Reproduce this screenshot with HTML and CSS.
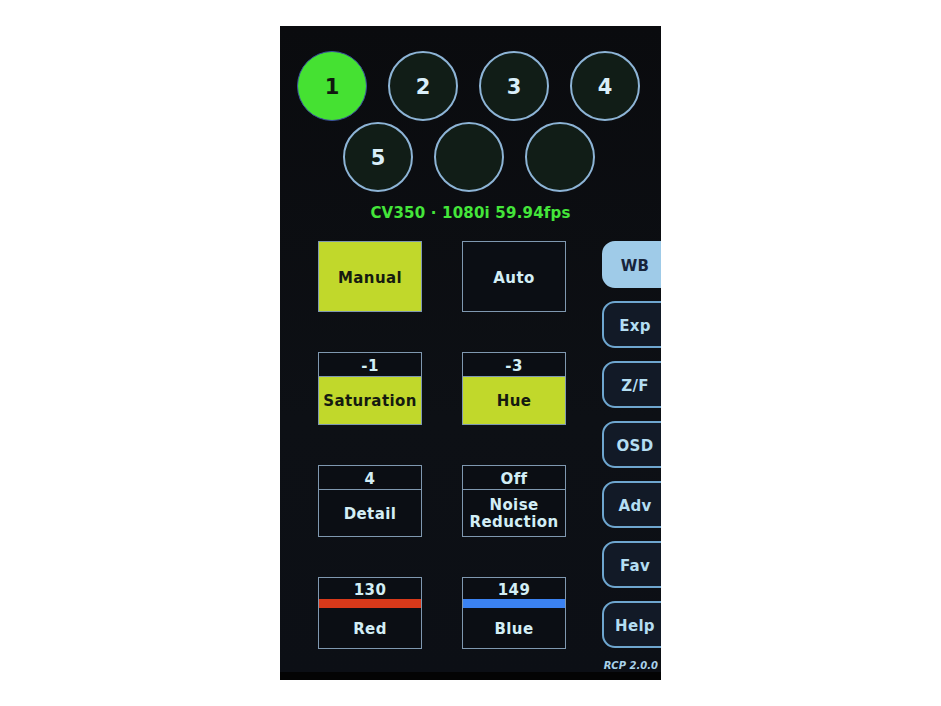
FILE: index.html
```html
<!DOCTYPE html>
<html>
<head>
<meta charset="utf-8">
<link rel="stylesheet" href="styles.css">
</head>
<body>
<div class="screen">
  <div class="cams">
    <div class="cam-row row1">
      <div class="cam active">1</div>
      <div class="cam">2</div>
      <div class="cam">3</div>
      <div class="cam">4</div>
    </div>
    <div class="cam-row row2">
      <div class="cam">5</div>
      <div class="cam"></div>
      <div class="cam"></div>
    </div>
  </div>
  <div class="status">CV350 · 1080i 59.94fps</div>
  <div class="main">
    <div class="grid">
      <div class="box on r1"><span class="lbl">Manual</span></div>
      <div class="box r1"><span class="lbl">Auto</span></div>
      <div class="box val r2"><div class="hd">-1</div><div class="bd on">Saturation</div></div>
      <div class="box val r2"><div class="hd">-3</div><div class="bd on">Hue</div></div>
      <div class="box val r3"><div class="hd">4</div><div class="bd">Detail</div></div>
      <div class="box val r3"><div class="hd">Off</div><div class="bd two">Noise<br>Reduction</div></div>
      <div class="box val r4"><div class="hd short">130</div><div class="bar red"></div><div class="bd">Red</div></div>
      <div class="box val r4"><div class="hd short">149</div><div class="bar blue"></div><div class="bd">Blue</div></div>
    </div>
    <div class="side">
      <div class="tab sel">WB</div>
      <div class="tab">Exp</div>
      <div class="tab">Z/F</div>
      <div class="tab">OSD</div>
      <div class="tab">Adv</div>
      <div class="tab">Fav</div>
      <div class="tab">Help</div>
      <div class="ver">RCP 2.0.0</div>
    </div>
  </div>
  <div class="bottom"></div>
</div>
</body>
</html>
```
FILE: styles.css
```css
html, body {
  margin: 0;
  padding: 0;
  background: #ffffff;
}
body {
  font-family: "DejaVu Sans", "Liberation Sans", sans-serif;
  font-weight: bold;
}
.screen {
  margin-left: 280px;
  margin-top: 26px;
  width: 381px;
  height: 654px;
  background: linear-gradient(180deg, #0a0b0e 0%, #0d1015 60%, #0c0f15 100%);
  overflow: hidden;
  display: flex;
  flex-direction: column;
}
.cams {
  padding-top: 25px;
  display: flex;
  flex-direction: column;
  gap: 1px;
}
.cam-row {
  display: flex;
  gap: 21px;
}
.row1 { padding-left: 17px; }
.row2 { padding-left: 63px; }
.cam {
  width: 70px;
  height: 70px;
  box-sizing: border-box;
  border-radius: 50%;
  border: 2px solid #8db4d6;
  background: #111d17;
  color: #d9eef9;
  font-size: 21px;
  padding-top: 2px;
  display: flex;
  align-items: center;
  justify-content: center;
}
.cam.active {
  background: #45e132;
  border-color: #3a4fa0;
  border-width: 1px;
  color: #10180f;
}
.status {
  margin-top: 10px;
  height: 20px;
  line-height: 22px;
  text-align: center;
  color: #44e63a;
  font-size: 15px;
  letter-spacing: 0.2px;
}
.main {
  margin-top: 19px;
  display: flex;
  flex: 1;
}
.grid {
  margin-left: 38px;
  display: grid;
  grid-template-columns: 104px 104px;
  grid-template-rows: 71px 73px 72px 72px;
  column-gap: 40px;
  row-gap: 40px;
  align-content: start;
}
.box {
  box-sizing: border-box;
  border: 1.5px solid #7f98b0;
  color: #d3eef6;
  font-size: 15px;
  letter-spacing: 0.4px;
  display: flex;
  flex-direction: column;
  background: #0b0e14;
}
.box.on {
  background: #c1d82b;
  color: #151a10;
}
.box .lbl {
  margin: auto;
  padding-top: 2px;
}
.box.r1 {
  align-items: center;
  justify-content: center;
}
.hd {
  height: 24px;
  box-sizing: border-box;
  border-bottom: 1.5px solid #7f98b0;
  padding-top: 2px;
  display: flex;
  align-items: center;
  justify-content: center;
  flex: none;
}
.hd.short {
  height: 21px;
  border-bottom: none;
}
.bar {
  height: 9px;
  flex: none;
}
.bar.red { background: #d8391a; }
.bar.blue { background: #3b82f2; }
.bd {
  flex: 1;
  display: flex;
  align-items: center;
  justify-content: center;
  text-align: center;
  line-height: 17px;
  padding-top: 2px;
}
.bd.on {
  background: #c1d82b;
  color: #151a10;
}
.side {
  margin-left: 36px;
  width: 59px;
  display: flex;
  flex-direction: column;
  gap: 13px;
}
.tab {
  width: 74px;
  height: 47px;
  flex: none;
  box-sizing: border-box;
  border: 2px solid #6ea6cf;
  border-radius: 13px;
  background: #121a27;
  color: #b4def2;
  font-size: 15px;
  letter-spacing: 0.3px;
  display: flex;
  align-items: center;
  justify-content: center;
  padding-top: 2px;
  padding-right: 8px;
}
.tab.sel {
  background: #9fcbe8;
  border-color: #9fcbe8;
  color: #17243a;
}
.ver {
  margin-top: -1px;
  font-size: 10px;
  font-style: italic;
  color: #a9d2ea;
  text-align: right;
  padding-right: 3px;
}
.bottom {
  height: 8px;
  background: #040404;
  flex: none;
}
```
